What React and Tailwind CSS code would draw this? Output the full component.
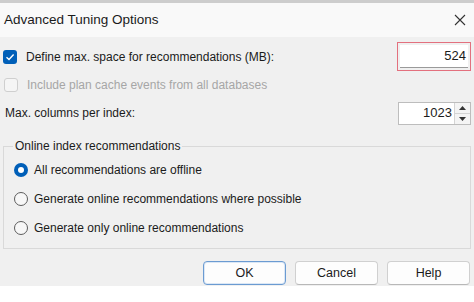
import React from "react";

const font = { fontFamily: '"Liberation Sans", Arial, sans-serif' };

const Check = ({ checked, disabled }) =>
  checked ? (
    <span className="flex h-[14px] w-[14px] items-center justify-center rounded-[3px] bg-[#005fb8]">
      <svg width="10" height="10" viewBox="0 0 10 10">
        <path d="M1.5 5.2 L4 7.5 L8.6 2.6" fill="none" stroke="#fff" strokeWidth="1.4" />
      </svg>
    </span>
  ) : (
    <span
      className={
        "h-[14px] w-[14px] rounded-[3px] border " +
        (disabled ? "border-[#cfcfcf] bg-[#f5f5f5]" : "border-[#666] bg-white")
      }
    />
  );

const Radio = ({ checked, label }) => (
  <div className="flex h-[29px] items-center gap-[6px] pl-[1px]">
    {checked ? (
      <span className="flex h-[14px] w-[14px] items-center justify-center rounded-full bg-[#005fb8]">
        <span className="h-[6px] w-[6px] rounded-full bg-white" />
      </span>
    ) : (
      <span className="h-[14px] w-[14px] rounded-full border border-[#5c5c5c] bg-[#f7f7f7]" />
    )}
    <span className="text-[12px] text-[#1b1b1b]">{label}</span>
  </div>
);

const Btn = ({ children, primary }) => (
  <button
    className={
      "h-[24px] w-[83px] rounded-[4px] border bg-[#fdfdfd] text-[12.5px] text-[#1b1b1b] " +
      (primary ? "border-[#6b9bd2] shadow-[inset_0_0_0_1px_#dbe7f5]" : "border-[#d0d0d0] border-b-[#b8b8b8]")
    }
  >
    {children}
  </button>
);

export default function App() {
  return (
    <div className="flex h-[302px] w-[474px] flex-col bg-white" style={font}>
      <div className="h-[3px] bg-[#cdcdcd]" />
      <div className="flex h-[34px] items-center justify-between bg-[#f9f9f9] pl-[4px] pr-[8px]">
        <span className="text-[13.5px] text-[#1b1b1b]">Advanced Tuning Options</span>
        <svg width="12" height="12" viewBox="0 0 12 12">
          <path d="M1 1 L11 11 M11 1 L1 11" stroke="#333" strokeWidth="1.1" />
        </svg>
      </div>

      <div className="flex h-[249px] flex-col bg-[#f0f0f0] px-[3px] pt-[5px]">
        <div className="flex h-[29px] items-center justify-between">
          <div className="flex items-center gap-[9px]">
            <Check checked />
            <span className="text-[12px] text-[#1b1b1b]">Define max. space for recommendations (MB):</span>
          </div>
          <div className="flex h-[29px] w-[74px] items-center border border-[#e3707e] p-[2px]">
            <div className="flex h-full w-full items-center justify-end border-b border-[#9a9a9a] bg-white pr-[2px] text-[13px] text-[#1b1b1b]">
              524
            </div>
          </div>
        </div>

        <div className="flex h-[28px] items-center gap-[9px] pl-[1px]">
          <Check disabled />
          <span className="text-[12px] text-[#a6a6a6]">Include plan cache events from all databases</span>
        </div>

        <div className="flex h-[28px] items-center justify-between">
          <span className="pl-[2px] text-[12px] text-[#1b1b1b]">Max. columns per index:</span>
          <div className="flex h-[23px] w-[73px] border border-[#bdbdbd] bg-white">
            <div className="flex flex-1 items-center justify-end pr-[2px] text-[13px] text-[#1b1b1b]">1023</div>
            <div className="flex w-[16px] flex-col border-l border-[#d4d4d4] bg-[#f4f4f4]">
              <div className="flex flex-1 items-center justify-center border-b border-[#d4d4d4]">
                <svg width="7" height="4" viewBox="0 0 7 4">
                  <path d="M0 4 L3.5 0 L7 4 Z" fill="#333" />
                </svg>
              </div>
              <div className="flex flex-1 items-center justify-center">
                <svg width="7" height="4" viewBox="0 0 7 4">
                  <path d="M0 0 L3.5 4 L7 0 Z" fill="#333" />
                </svg>
              </div>
            </div>
          </div>
        </div>

        <fieldset className="mt-[10px] w-[468px] border border-[#d9d9d9] px-[9px] pb-[6px]">
          <legend className="px-[2px] text-[12px] text-[#1b1b1b]">Online index recommendations</legend>
          <Radio checked label="All recommendations are offline" />
          <Radio label="Generate online recommendations where possible" />
          <Radio label="Generate only online recommendations" />
        </fieldset>

        <div className="mt-[12px] flex justify-end gap-[9px] pr-[1px]">
          <Btn primary>OK</Btn>
          <Btn>Cancel</Btn>
          <Btn>Help</Btn>
        </div>
      </div>
    </div>
  );
}
